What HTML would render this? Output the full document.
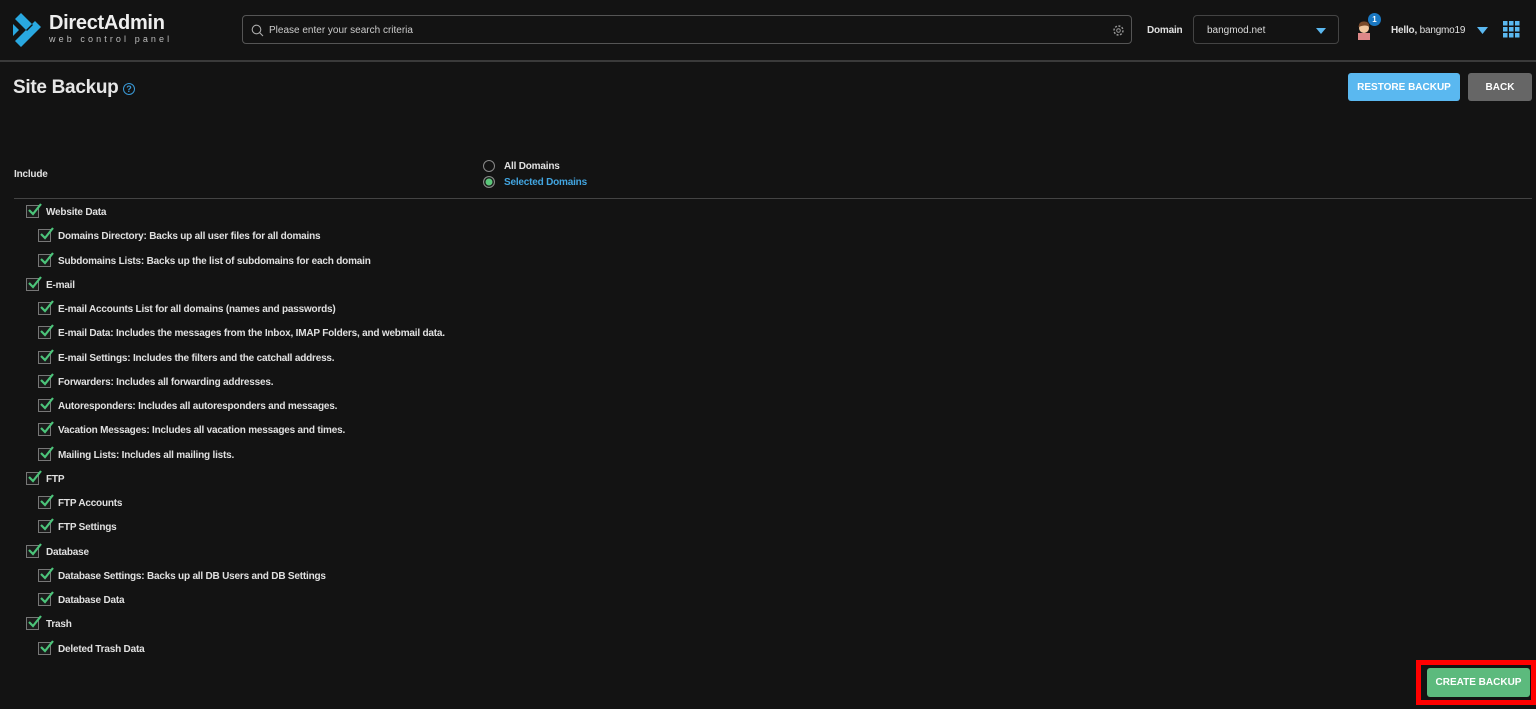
<!DOCTYPE html>
<html><head><meta charset="utf-8"><style>
*{box-sizing:border-box;margin:0;padding:0}
body{width:1536px;height:709px;background:#131313;font-family:"Liberation Sans",sans-serif;color:#ddd;position:relative;overflow:hidden}
.abs{position:absolute}
.hdr{left:0;top:0;width:1536px;height:62px;border-bottom:2px solid #3a3a3a}
.search{left:242px;top:15px;width:890px;height:29px;border:1px solid #555;border-radius:4px}
.search span{position:absolute;left:26px;top:9px;font-size:10px;color:#ccc}
.t{font-size:10px;font-weight:bold;letter-spacing:-0.2px;color:#e0e0e0;white-space:nowrap}
.cb{position:absolute;width:13px;height:13px;border:1.5px solid #777;background:#1b1b1b}
.cb svg{position:absolute;left:0;top:-4px}
.btn{position:absolute;height:28px;border-radius:3px;font-size:10px;font-weight:bold;color:#fff;text-align:center;line-height:29px}
</style></head><body>
<div class="abs hdr"></div>
<svg class="abs" style="left:13px;top:13px" width="30" height="34" viewBox="0 0 30 34"><path d="M2 6 L8 0 L20 12 L14 18 Z M2 28 L8 34 L28 14 L22 8 Z" fill="#29a8e0"/><path d="M0 11 L6 17 L0 23 Z" fill="#29a8e0"/></svg>
<div class="abs" style="left:49px;top:12px;font-size:20px;font-weight:bold;color:#eee;letter-spacing:-0.3px">DirectAdmin</div>
<div class="abs" style="left:49px;top:34px;font-size:9px;color:#bbb;letter-spacing:3.1px">web control panel</div>
<div class="abs search"><svg style="position:absolute;left:8px;top:8px" width="13" height="13" viewBox="0 0 13 13"><circle cx="5.5" cy="5.5" r="4.3" fill="none" stroke="#aaa" stroke-width="1.1"/><path d="M8.6 8.6L12 12" stroke="#aaa" stroke-width="1.1"/></svg><span>Please enter your search criteria</span>
<svg style="position:absolute;right:6px;top:8px" width="13" height="13" viewBox="0 0 13 13"><circle cx="6.5" cy="6.5" r="4.5" fill="none" stroke="#999" stroke-width="1.4" stroke-dasharray="2 1.5"/><circle cx="6.5" cy="6.5" r="1.8" fill="none" stroke="#999"/></svg></div>
<div class="abs t" style="left:1147px;top:25px">Domain</div>
<div class="abs" style="left:1193px;top:15px;width:146px;height:29px;border:1px solid #444;border-radius:4px"><span style="position:absolute;left:13px;top:9px;font-size:10px;color:#ddd">bangmod.net</span><svg style="position:absolute;left:122px;top:12px" width="10" height="6"><path d="M0 0H10L5 6Z" fill="#5ab8f0"/></svg></div>
<svg class="abs" style="left:1354px;top:18px" width="20" height="22" viewBox="0 0 20 22"><rect x="4" y="15" width="12" height="7" fill="#d88" /><circle cx="10" cy="10" r="5" fill="#f2c8a0"/><path d="M4.5 9 Q5 3 10 3.5 Q15 3 15.5 9 Q12 6 4.5 9Z" fill="#7a4a2a"/></svg>
<div class="abs" style="left:1368px;top:13px;width:13px;height:13px;border-radius:50%;background:#1a78c2;color:#fff;font-size:8px;font-weight:bold;text-align:center;line-height:13px">1</div>
<div class="abs t" style="left:1391px;top:25px">Hello, <span style="font-weight:normal">bangmo19</span></div>
<svg class="abs" style="left:1477px;top:27px" width="11" height="7"><path d="M0 0H11L5.5 7Z" fill="#5ab8f0"/></svg>
<svg class="abs" style="left:1503px;top:21px" width="17" height="17"><g fill="#5ab8f0"><rect x="0" y="0" width="4.5" height="4.5"/><rect x="6" y="0" width="4.5" height="4.5"/><rect x="12" y="0" width="4.5" height="4.5"/><rect x="0" y="6" width="4.5" height="4.5"/><rect x="6" y="6" width="4.5" height="4.5"/><rect x="12" y="6" width="4.5" height="4.5"/><rect x="0" y="12" width="4.5" height="4.5"/><rect x="6" y="12" width="4.5" height="4.5"/><rect x="12" y="12" width="4.5" height="4.5"/></g></svg>
<div class="abs" style="left:13px;top:77px;font-size:19px;font-weight:bold;color:#e6e6e6;letter-spacing:-0.3px">Site Backup</div>
<div class="abs" style="left:123px;top:83px;width:12px;height:12px;border:1.5px solid #3a9ad8;border-radius:50%;color:#3a9ad8;font-size:9px;font-weight:bold;text-align:center;line-height:10px">?</div>
<div class="btn" style="left:1348px;top:73px;width:112px;background:#5ab8f0">RESTORE BACKUP</div>
<div class="btn" style="left:1468px;top:73px;width:64px;background:#666">BACK</div>
<div class="abs t" style="left:14px;top:169px;font-weight:bold">Include</div>
<div class="abs" style="left:483px;top:160px;width:12px;height:12px;border:1.5px solid #888;border-radius:50%"></div>
<div class="abs t" style="left:504px;top:161px">All Domains</div>
<div class="abs" style="left:483px;top:176px;width:12px;height:12px;border:1.5px solid #888;border-radius:50%;background:#5cc77a;box-shadow:inset 0 0 0 1.5px #1b1b1b"></div>
<div class="abs t" style="left:504px;top:177px;color:#42a5e0">Selected Domains</div>
<div class="abs" style="left:14px;top:198px;width:1518px;height:1px;background:#444"></div>
<div id="list"></div>
<div class="abs" style="left:1416px;top:660px;width:120px;height:45px;border:5px solid #f00"></div>
<div class="btn" style="left:1427px;top:668px;width:103px;height:29px;line-height:30px;background:#5cba7d">CREATE BACKUP</div>
<script>
const items=[[0,"Website Data"],[1,"Domains Directory: Backs up all user files for all domains"],[1,"Subdomains Lists: Backs up the list of subdomains for each domain"],[0,"E-mail"],[1,"E-mail Accounts List for all domains (names and passwords)"],[1,"E-mail Data: Includes the messages from the Inbox, IMAP Folders, and webmail data."],[1,"E-mail Settings: Includes the filters and the catchall address."],[1,"Forwarders: Includes all forwarding addresses."],[1,"Autoresponders: Includes all autoresponders and messages."],[1,"Vacation Messages: Includes all vacation messages and times."],[1,"Mailing Lists: Includes all mailing lists."],[0,"FTP"],[1,"FTP Accounts"],[1,"FTP Settings"],[0,"Database"],[1,"Database Settings: Backs up all DB Users and DB Settings"],[1,"Database Data"],[0,"Trash"],[1,"Deleted Trash Data"]];
let h="";items.forEach((it,i)=>{const y=205+i*24.25;const x=it[0]?38:26;
h+=`<div class="cb" style="left:${x}px;top:${y}px"><svg width="16" height="16" viewBox="0 0 16 16"><path d="M2 8 L6 12 L14 2" fill="none" stroke="#4cc47a" stroke-width="2.2"/></svg></div><div class="abs t" style="left:${x+20}px;top:${y+2}px">${it[1]}</div>`});
document.getElementById("list").innerHTML=h;
</script>
</body></html>
